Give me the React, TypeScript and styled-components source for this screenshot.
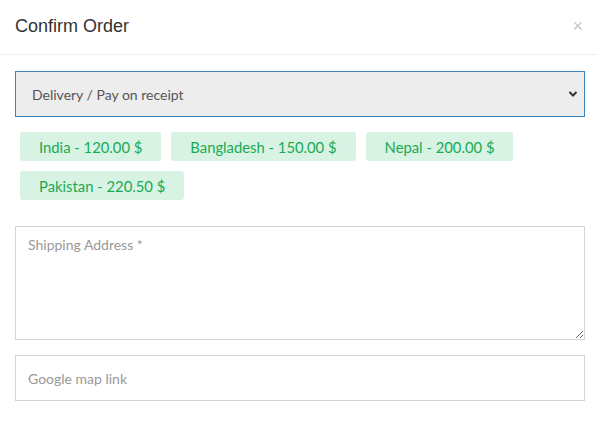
import styled, { createGlobalStyle } from 'styled-components'

const Global = createGlobalStyle`
  html, body {
    margin: 0;
    padding: 0;
    background: #fff;
  }
  * {
    box-sizing: border-box;
  }
`

const Modal = styled.div`
  width: 598px;
  height: 431px;
  background: #fff;
  font-family: 'Segoe UI', Lato, 'Noto Sans', sans-serif;
`

const Header = styled.div`
  height: 55px;
  display: flex;
  align-items: center;
  justify-content: space-between;
  padding: 0 15px 2px 15px;
  border-bottom: 1px solid #eeeeee;
`

const Title = styled.h4`
  margin: 0;
  font-family: 'Liberation Sans', Arial, sans-serif;
  font-size: 18px;
  font-weight: 400;
  color: #333;
`

const Close = styled.button`
  border: 0;
  background: none;
  padding: 0;
  font-family: 'Liberation Sans', Arial, sans-serif;
  font-size: 18px;
  line-height: 1;
  color: #c8c8c8;
  cursor: pointer;
`

const Body = styled.div`
  padding: 16px 13px 15px 15px;
  display: flex;
  flex-direction: column;
`

const SelectWrap = styled.div`
  position: relative;
  height: 46px;
`

const Select = styled.select`
  appearance: none;
  width: 100%;
  height: 100%;
  border: 1px solid #3d85c0;
  background: #ededed;
  padding: 0 16px;
  font-family: inherit;
  font-size: 14px;
  color: #555;
  outline: none;
`

const Chevron = styled.svg`
  position: absolute;
  right: 7px;
  top: 19px;
  pointer-events: none;
`

const Chips = styled.div`
  display: flex;
  flex-wrap: wrap;
  gap: 10px;
  padding: 0 5px;
  margin-top: 15px;
`

const Chip = styled.button`
  height: 29px;
  padding: 0 19px;
  border: 0;
  border-radius: 3px;
  background: #d8f3e3;
  color: #19aa55;
  font-family: inherit;
  font-size: 14.8px;
  cursor: pointer;
`

const Area = styled.textarea`
  margin-top: 26px;
  height: 114px;
  width: 100%;
  border: 1px solid #d1d3dd;
  padding: 9px 12px;
  font-family: inherit;
  font-size: 14px;
  color: #555;
  outline: none;
  &::placeholder {
    color: #999;
  }
`

const Input = styled.input`
  margin-top: 15px;
  height: 46px;
  width: 100%;
  border: 1px solid #d1d3dd;
  padding: 0 12px;
  font-family: inherit;
  font-size: 14px;
  color: #555;
  outline: none;
  &::placeholder {
    color: #999;
  }
`

const prices = [
  { name: 'India', price: '120.00' },
  { name: 'Bangladesh', price: '150.00' },
  { name: 'Nepal', price: '200.00' },
  { name: 'Pakistan', price: '220.50' },
]

export default function App() {
  return (
    <Modal>
      <Global />
      <Header>
        <Title>Confirm Order</Title>
        <Close aria-label="close">×</Close>
      </Header>
      <Body>
        <SelectWrap>
          <Select defaultValue="delivery">
            <option value="delivery">Delivery / Pay on receipt</option>
            <option value="pickup">Pickup</option>
          </Select>
          <Chevron width="10" height="8" viewBox="0 0 10 8">
            <path d="M1.5 2 L5 5.5 L8.5 2" fill="none" stroke="#333" strokeWidth="2" />
          </Chevron>
        </SelectWrap>
        <Chips>
          {prices.map(p => (
            <Chip key={p.name}>
              {p.name} - {p.price} $
            </Chip>
          ))}
        </Chips>
        <Area placeholder="Shipping Address *" />
        <Input placeholder="Google map link" />
      </Body>
    </Modal>
  )
}
